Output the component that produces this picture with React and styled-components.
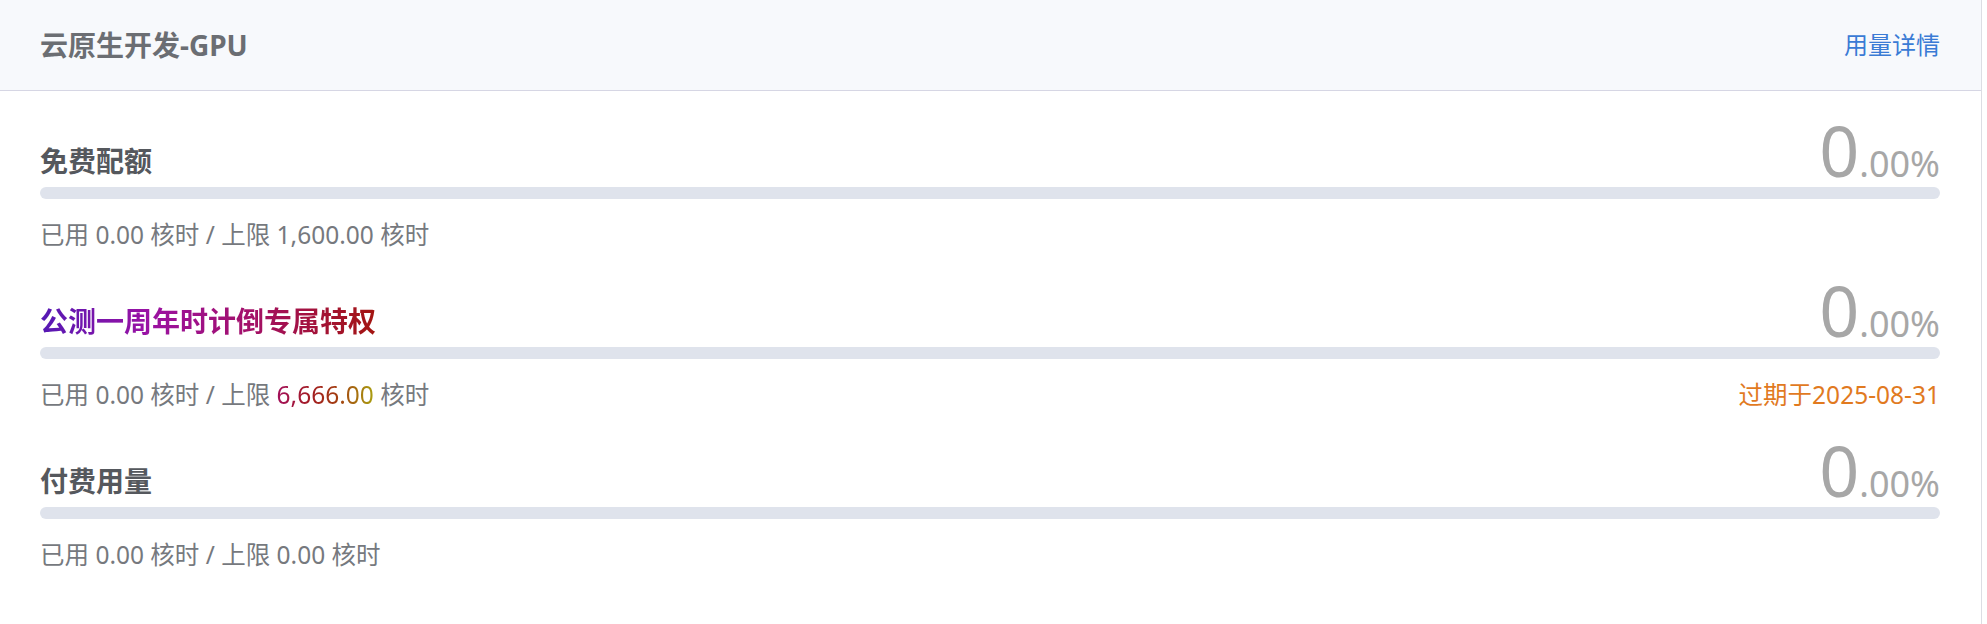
import React from "react";
import styled, { createGlobalStyle } from "styled-components";

const GlobalStyle = createGlobalStyle`
  html, body {
    margin: 0;
    padding: 0;
    background: #fff;
  }
  body {
    font-family: "Noto Sans", "Noto Sans CJK SC", sans-serif;
  }
`;

const Card = styled.div`
  width: 1982px;
  box-sizing: border-box;
  border-right: 1px solid #dcdde3;
  background: #fff;
  min-height: 624px;
`;

const Header = styled.div`
  height: 90px;
  box-sizing: content-box;
  border-bottom: 1px solid #d6d6e4;
  background: #f7f9fc;
  display: flex;
  align-items: center;
  justify-content: space-between;
  padding: 0 41px 0 40px;
`;

const Title = styled.h2`
  margin: 0;
  font-size: 28px;
  font-weight: 700;
  color: #6b6e73;
  line-height: 1;
`;

const DetailLink = styled.a`
  font-size: 24px;
  color: #3a7bd5;
  text-decoration: none;
  line-height: 1;
  cursor: pointer;
`;

const Body = styled.div`
  padding: 24px 41px 0 40px;
  display: flex;
  flex-direction: column;
  gap: 28px;
`;

const Section = styled.div`
  display: flex;
  flex-direction: column;
`;

const TopRow = styled.div`
  display: flex;
  justify-content: space-between;
  align-items: flex-end;
`;

const Label = styled.div`
  font-size: 28px;
  line-height: 1;
  font-weight: 700;
  color: #55585d;
  margin-bottom: 10px;
`;

const GradientLabel = styled(Label)`
  background: linear-gradient(90deg, #5418b4 0%, #9a12a4 32%, #a3106a 62%, #a3140f 100%);
  -webkit-background-clip: text;
  background-clip: text;
  color: transparent;
`;

const Percent = styled.div`
  font-size: 70px;
  line-height: 1;
  color: #a7a7a7;
  white-space: nowrap;
`;

const Fraction = styled.span`
  font-size: 36px;
  line-height: 1;
`;

const Bar = styled.div`
  margin-top: 2px;
  height: 12px;
  border-radius: 6px;
  background: #dfe3ec;
  overflow: hidden;
`;

const Fill = styled.div`
  height: 100%;
  background: #4a8af4;
`;

const InfoRow = styled.div`
  margin-top: 24px;
  height: 24px;
  display: flex;
  justify-content: space-between;
  align-items: center;
  font-size: 24.5px;
  line-height: 24px;
  color: #76797e;
`;

const Highlight = styled.span`
  background: linear-gradient(90deg, #a3105a 0%, #a31c22 35%, #a3420f 65%, #aaa010 100%);
  -webkit-background-clip: text;
  background-clip: text;
  color: transparent;
`;

const Expire = styled.span`
  color: #e17a1f;
`;

const quotas = [
  { key: "free", label: "免费配额", used: "0.00", limit: "1,600.00", percent: 0 },
  { key: "promo", label: "公测一周年时计倒专属特权", used: "0.00", limit: "6,666.00", percent: 0, special: true, expire: "2025-08-31" },
  { key: "paid", label: "付费用量", used: "0.00", limit: "0.00", percent: 0 },
];

function QuotaSection({ item }) {
  const [whole, frac] = item.percent.toFixed(2).split(".");
  const LabelTag = item.special ? GradientLabel : Label;
  return (
    <Section>
      <TopRow>
        <LabelTag>{item.label}</LabelTag>
        <Percent>
          {whole}
          <Fraction>.{frac}%</Fraction>
        </Percent>
      </TopRow>
      <Bar>
        <Fill style={{ width: `${item.percent}%` }} />
      </Bar>
      <InfoRow>
        <span>
          已用 {item.used} 核时 / 上限{" "}
          {item.special ? <Highlight>{item.limit}</Highlight> : item.limit} 核时
        </span>
        {item.expire && <Expire>过期于{item.expire}</Expire>}
      </InfoRow>
    </Section>
  );
}

export default function App() {
  return (
    <>
      <GlobalStyle />
      <Card>
        <Header>
          <Title>云原生开发-GPU</Title>
          <DetailLink>用量详情</DetailLink>
        </Header>
        <Body>
          {quotas.map((q) => (
            <QuotaSection key={q.key} item={q} />
          ))}
        </Body>
      </Card>
    </>
  );
}
